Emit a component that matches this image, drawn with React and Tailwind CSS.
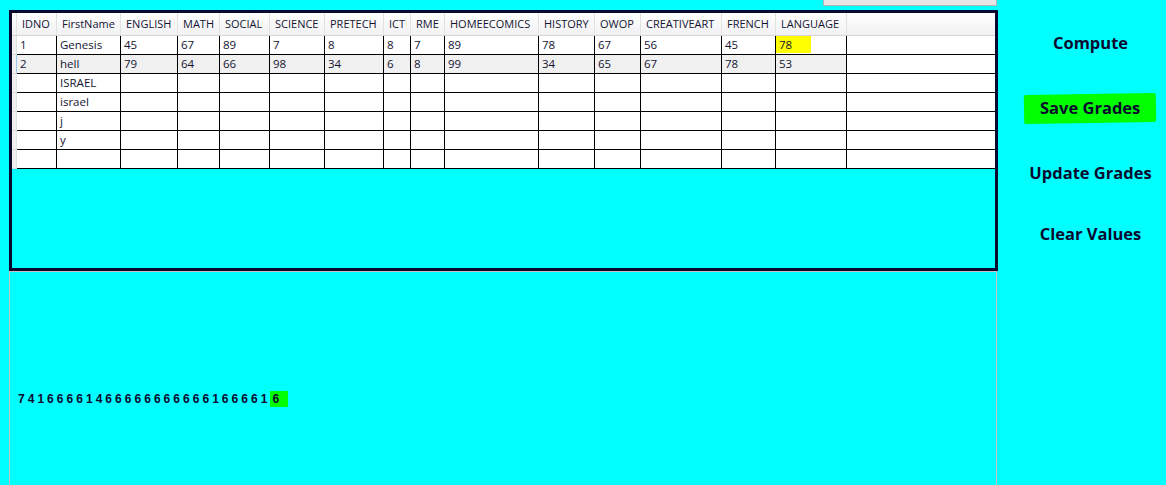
import React from 'react';

const cols = [
  { name: 'IDNO', w: 'w-[40px]' },
  { name: 'FirstName', w: 'w-[64px]' },
  { name: 'ENGLISH', w: 'w-[57px]' },
  { name: 'MATH', w: 'w-[42px]' },
  { name: 'SOCIAL', w: 'w-[50px]' },
  { name: 'SCIENCE', w: 'w-[55px]' },
  { name: 'PRETECH', w: 'w-[59px]' },
  { name: 'ICT', w: 'w-[27px]' },
  { name: 'RME', w: 'w-[34px]' },
  { name: 'HOMEECOMICS', w: 'w-[94px]' },
  { name: 'HISTORY', w: 'w-[56px]' },
  { name: 'OWOP', w: 'w-[46px]' },
  { name: 'CREATIVEART', w: 'w-[81px]' },
  { name: 'FRENCH', w: 'w-[54px]' },
  { name: 'LANGUAGE', w: 'w-[71px]' },
];

const rows = [
  ['1', 'Genesis', '45', '67', '89', '7', '8', '8', '7', '89', '78', '67', '56', '45', '78'],
  ['2', 'hell', '79', '64', '66', '98', '34', '6', '8', '99', '34', '65', '67', '78', '53'],
  ['', 'ISRAEL'],
  ['', 'israel'],
  ['', 'j'],
  ['', 'y'],
  [''],
];

const digits = '7 4 1 6 6 6 6 1 4 6 6 6 6 6 6 6 6 6 6 6 1 6 6 6 6 1';

function GradeGrid() {
  return (
    <div className="flex flex-col text-[11.5px] text-[#141432]" style={{ fontFamily: '"Open Sans", "Noto Sans", sans-serif' }}>
      <div className="flex h-[23px] border-b border-[#d5d5d5] bg-gradient-to-b from-white to-[#f1f1f3] text-[11px]">
        <div className="w-[5px] shrink-0 border-r border-[#e3e3e3]" />
        {cols.map((c) => (
          <div key={c.name} className={`${c.w} shrink-0 border-r border-[#e1e1e1] pl-[5px] leading-[22px] whitespace-nowrap overflow-hidden`}>{c.name}</div>
        ))}
        <div className="flex-1" />
      </div>
      {rows.map((r, i) => (
        <div key={i} className={`flex h-[19px] ${i === 1 ? 'bg-[#f0f0f0]' : 'bg-white'}`}>
          <div className={`w-[5px] shrink-0 bg-[#f0f0f0] border-b border-[#dcdcdc] ${i === 1 ? 'border-r border-r-[#9fc3e8]' : 'border-r border-r-[#e3e3e3]'}`} />
          {cols.map((c, j) => (
            <div key={c.name} className={`${c.w} shrink-0 border-r border-b border-black pl-[3px] leading-[18px] whitespace-nowrap`}>
              {i === 0 && j === 14 ? (
                <span className="-ml-[3px] pl-[3px] inline-block w-[35px] h-[17px] bg-[#ffff00] leading-[17px]">{r[j]}</span>
              ) : (
                r[j] ?? ''
              )}
            </div>
          ))}
          <div className="flex-1 border-b border-black bg-white" />
        </div>
      ))}
    </div>
  );
}

function ActionLink({ label, className = '' }) {
  return (
    <div className={`text-[16.5px] font-bold text-[#0a0a2e] text-center ${className}`}>{label}</div>
  );
}

export default function App() {
  return (
    <div className="flex w-[1166px] h-[485px] bg-[#00ffff] overflow-hidden" style={{ fontFamily: '"Open Sans", "Noto Sans", sans-serif' }}>
      <div className="w-[998px] shrink-0 flex flex-col">
        <div className="h-[10px] shrink-0">
          <div className="ml-[823px] w-[174px] h-[6px] bg-[#e6e6e6] border border-t-0 border-[#b4b4b4]" />
        </div>
        <div className="ml-[9px] w-[989px] h-[261px] shrink-0 border-[3px] border-[#0a0a2e] overflow-hidden">
          <GradeGrid />
        </div>
        <div className="ml-[9px] w-[988px] flex-1 border-l border-r border-t border-[#c8c0c4]">
          <div className="mt-[118px] pl-[8px] flex items-center text-[12px] tracking-[-0.15px] font-bold text-[#0a0a2e] whitespace-pre" style={{ fontFamily: '"Liberation Sans", Arial, sans-serif' }}>
            <span>{digits} </span>
            <span className="bg-[#00ff00] w-[18px] h-[16px] leading-[16px] pl-[2px]">6</span>
          </div>
        </div>
      </div>
      <div className="flex-1 flex flex-col items-center pl-[17px] pt-[31px]">
        <ActionLink label="Compute" />
        <div className="mt-[38px] bg-[#00ff00] px-[16px] py-[2px] rounded-[2px] -rotate-1">
          <ActionLink label="Save Grades" className="rotate-1" />
        </div>
        <ActionLink label="Update Grades" className="mt-[38px]" />
        <ActionLink label="Clear Values" className="mt-[37px]" />
      </div>
    </div>
  );
}
